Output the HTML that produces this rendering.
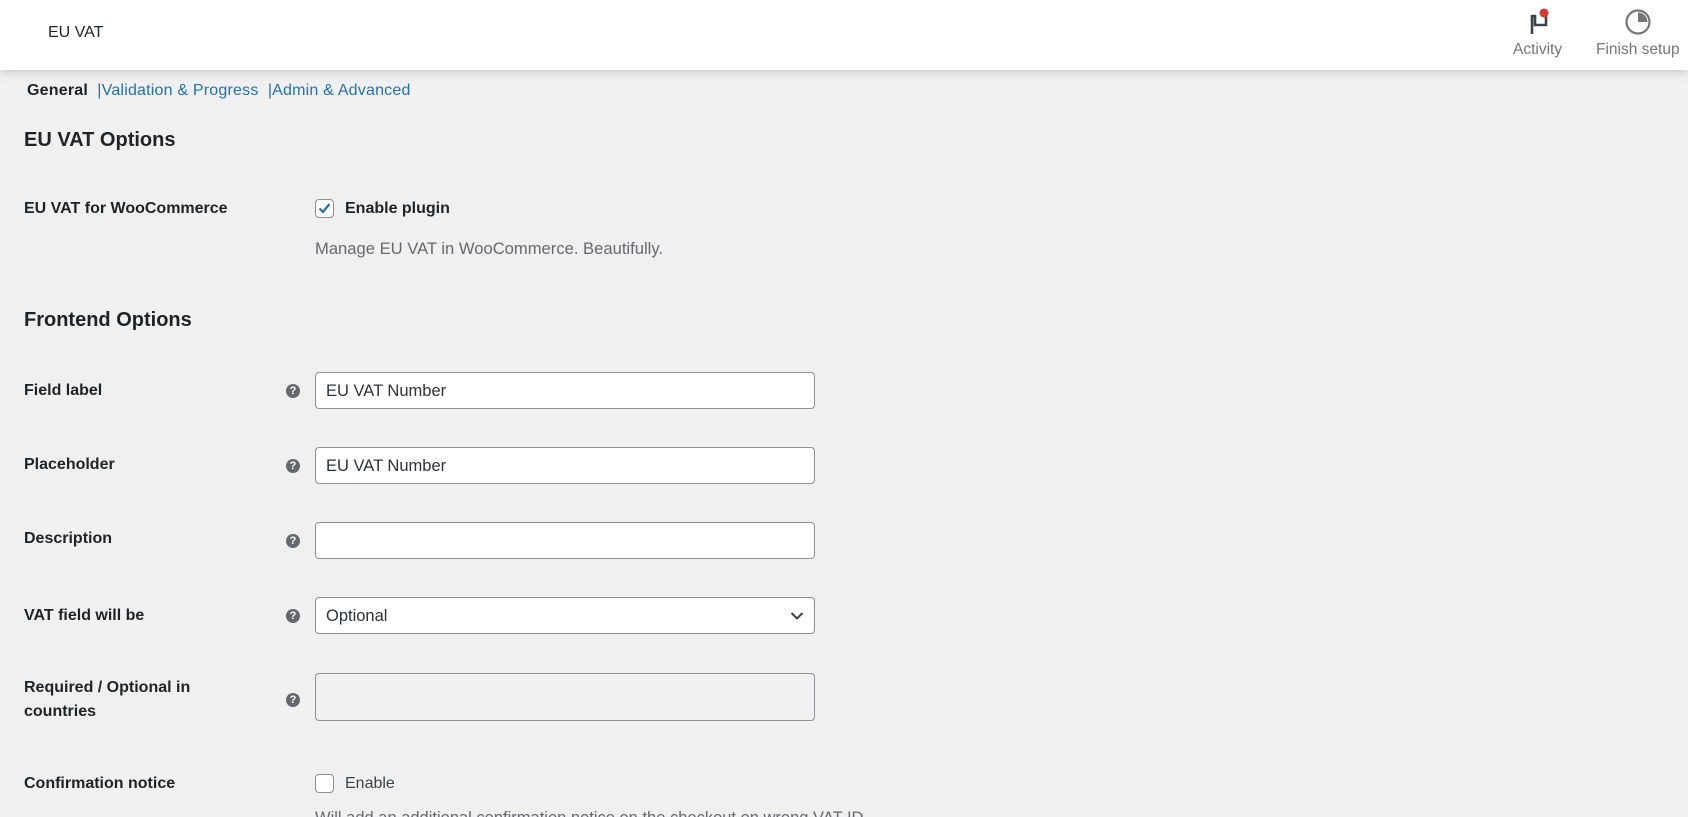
<!DOCTYPE html>
<html><head><meta charset="utf-8"><style>
*{box-sizing:border-box;margin:0;padding:0}
html,body{width:1688px;height:817px;overflow:hidden}
body{background:#f0f0f1;font-family:"Liberation Sans",sans-serif;color:#1d2327;position:relative}
.hdr{position:absolute;left:0;top:0;width:1688px;height:70px;background:#fff;box-shadow:0 2px 10px rgba(0,0,0,.18)}
.a{position:absolute;white-space:nowrap}
.lbl{font-size:16px;font-weight:bold;color:#1d2327}
.inp{position:absolute;left:315px;width:500px;height:37px;background:#fff;border:1px solid #8c8f94;border-radius:4px;font-size:16.5px;color:#2c3338;padding:9px 10px}
.help{position:absolute;left:286px;width:14px;height:14px;border-radius:50%;background:#646970;color:#fff;font-size:11px;font-weight:bold;text-align:center;line-height:14px}
.cb{position:absolute;left:315px;width:19px;height:19px;border:1px solid #8c8f94;border-radius:4px;background:#fff}
</style></head><body>
<div class="hdr"></div>
<div class="a" style="left:48px;top:24px;font-size:16px;color:#1d2327">EU VAT</div>
<svg class="a" style="left:1526px;top:6px" width="28" height="30" viewBox="0 0 28 30"><path d="M6 9v19M6 10h3v9h11V10h-3" fill="none" stroke="#3c434a" stroke-width="2.6"/><circle cx="18" cy="7" r="4.5" fill="#d63638"/></svg>
<div class="a" style="left:1513px;top:41px;font-size:15.5px;color:#757575">Activity</div>
<svg class="a" style="left:1624px;top:8px" width="28" height="28" viewBox="0 0 28 28"><circle cx="14" cy="14" r="11.5" fill="none" stroke="#757575" stroke-width="2.2"/><path d="M14 14V4.5A9.5 9.5 0 0 1 23.5 14z" fill="#757575"/></svg>
<div class="a" style="left:1596px;top:41px;font-size:15.5px;color:#757575">Finish setup</div>
<div class="a" style="left:27px;top:82px;font-size:16px;letter-spacing:0.2px"><b style="color:#1d2327">General</b>&nbsp; <span style="color:#2271b1">|Validation &amp; Progress</span>&nbsp; <span style="color:#2271b1">|Admin &amp; Advanced</span></div>
<div class="a" style="left:24px;top:129px;font-size:20px;font-weight:bold;color:#1d2327">EU VAT Options</div>
<div class="a lbl" style="left:24px;top:200px">EU VAT for WooCommerce</div>
<div class="cb" style="top:199px"><svg width="17" height="17" viewBox="0 0 17 17"><path d="M3.5 8.5l3.5 3.5 6.5-8" fill="none" stroke="#2271b1" stroke-width="2.2"/></svg></div>
<div class="a" style="left:345px;top:200px;font-size:16px;font-weight:bold;color:#1d2327">Enable plugin</div>
<div class="a" style="left:315px;top:239px;font-size:16.6px;color:#646970">Manage EU VAT in WooCommerce. Beautifully.</div>
<div class="a" style="left:24px;top:309px;font-size:20px;font-weight:bold">Frontend Options</div>
<div class="a lbl" style="left:24px;top:382px">Field label</div>
<div class="help" style="top:384px">?</div>
<div class="inp" style="top:372px">EU VAT Number</div>
<div class="a lbl" style="left:24px;top:456px">Placeholder</div>
<div class="help" style="top:459px">?</div>
<div class="inp" style="top:447px">EU VAT Number</div>
<div class="a lbl" style="left:24px;top:530px">Description</div>
<div class="help" style="top:534px">?</div>
<div class="inp" style="top:522px"></div>
<div class="a lbl" style="left:24px;top:607px">VAT field will be</div>
<div class="help" style="top:609px">?</div>
<div class="inp" style="top:597px">Optional<svg style="position:absolute;right:10px;top:13px" width="14" height="10" viewBox="0 0 14 10"><path d="M1.5 2l5.5 5.5L12.5 2" fill="none" stroke="#3c434a" stroke-width="2"/></svg></div>
<div class="a lbl" style="left:24px;top:679px">Required / Optional in</div>
<div class="a lbl" style="left:24px;top:703px">countries</div>
<div class="help" style="top:693px">?</div>
<div class="inp" style="top:673px;height:48px;background:#f0f0f1"></div>
<div class="a lbl" style="left:24px;top:775px">Confirmation notice</div>
<div class="cb" style="top:774px"></div>
<div class="a" style="left:345px;top:775px;font-size:16px;color:#3c434a">Enable</div>
<div class="a" style="left:315px;top:809px;font-size:16.5px;color:#646970">Will add an additional confirmation notice on the checkout on wrong VAT ID.</div>
</body></html>
